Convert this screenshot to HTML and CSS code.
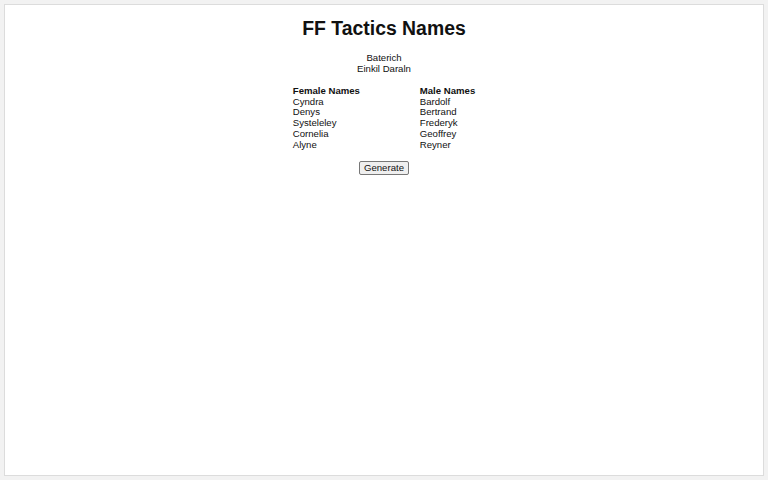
FILE: index.html
```html
<!DOCTYPE html>
<html lang="en">
<head>
    <meta charset="UTF-8">
    <title>FF Tactics Names</title>
    <link rel="stylesheet" href="styles.css">
</head>
<body>
<div id="page">
    <h1>FF Tactics Names</h1>
    <div id="picked">
        <div>Baterich</div>
        <div>Einkil Daraln</div>
    </div>
    <div class="lists">
        <div class="list">
            <div class="list-head">Female Names</div>
            <div>Cyndra</div>
            <div>Denys</div>
            <div>Systeleley</div>
            <div>Cornelia</div>
            <div>Alyne</div>
        </div>
        <div class="list">
            <div class="list-head">Male Names</div>
            <div>Bardolf</div>
            <div>Bertrand</div>
            <div>Frederyk</div>
            <div>Geoffrey</div>
            <div>Reyner</div>
        </div>
    </div>
    <div class="actions">
        <button id="generate">Generate</button>
    </div>
</div>
</body>
</html>
```

FILE: styles.css
```css
html, body { height: 100%; }
body {
    font-family: 'Liberation Sans', Arial, sans-serif;
    background: #f2f2f2;
    margin: 0;
    padding: 4px;
    box-sizing: border-box;
}
#page {
    background: white;
    border: 1px solid #dcdcdc;
    height: 100%;
    box-sizing: border-box;
    padding-top: 13px;
    font-size: 9.6px;
    color: #111;
}
h1 {
    text-align: center;
    font-size: 19.4px;
    margin: 0 0 14px;
    line-height: 20px;
}
#picked {
    text-align: center;
    line-height: 11px;
    margin-bottom: 12px;
}
.lists {
    display: flex;
    justify-content: center;
    line-height: 10.7px;
}
.list { width: 127px; }
.list:last-child { width: auto; min-width: 55px; }
.list-head { font-weight: bold; }
.actions {
    text-align: center;
    margin-top: 11px;
}
#generate {
    font-family: 'Liberation Sans', Arial, sans-serif;
    font-size: 9.6px;
    padding: 1px 4px;
    background: #efefef;
    border: 1px solid #777;
    border-radius: 2px;
    line-height: 10px;
    color: #111;
}
```
